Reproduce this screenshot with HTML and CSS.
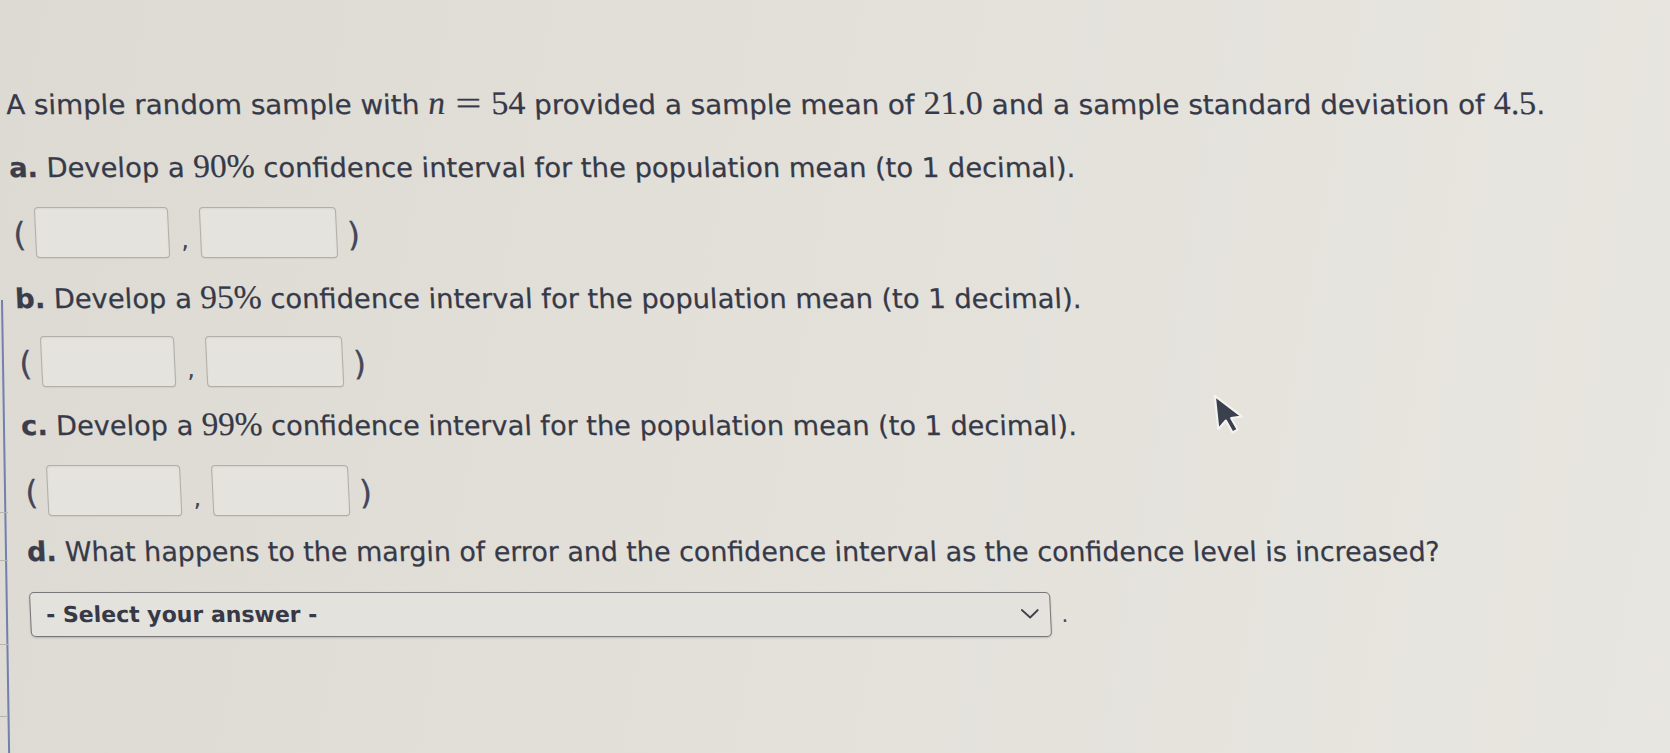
FILE: index.html
```html
<!DOCTYPE html>
<html lang="en">
<head>
<meta charset="utf-8">
<title>Confidence intervals</title>
<link rel="stylesheet" href="styles.css">
</head>
<body>
<div class="page">
  <div class="sheet">
    <p class="line intro">A simple random sample with <span class="math"><i class="mi">n</i><span class="mo">=</span>54</span> provided a sample mean of <span class="math">21.0</span> and a sample standard deviation of <span class="math">4.5</span>.</p>

    <p class="line la"><b class="lbl">a.</b> Develop a <span class="math">90%</span> confidence interval for the population mean (to 1 decimal).</p>
    <div class="interval">
      <span class="paren">(</span><input class="box" type="text" aria-label="lower bound 90%"><span class="comma">,</span><input class="box box2" type="text" aria-label="upper bound 90%"><span class="paren close">)</span>
    </div>

    <p class="line lb"><b class="lbl">b.</b> Develop a <span class="math">95%</span> confidence interval for the population mean (to 1 decimal).</p>
    <div class="interval ib">
      <span class="paren">(</span><input class="box" type="text" aria-label="lower bound 95%"><span class="comma">,</span><input class="box box2" type="text" aria-label="upper bound 95%"><span class="paren close">)</span>
    </div>

    <p class="line lc"><b class="lbl">c.</b> Develop a <span class="math">99%</span> confidence interval for the population mean (to 1 decimal).</p>
    <div class="interval">
      <span class="paren">(</span><input class="box" type="text" aria-label="lower bound 99%"><span class="comma">,</span><input class="box box2" type="text" aria-label="upper bound 99%"><span class="paren close">)</span>
    </div>

    <p class="line ld"><b class="lbl">d.</b> What happens to the margin of error and the confidence interval as the confidence level is increased?</p>
    <div class="answer">
      <div class="select">
        <span class="select-text">- Select your answer -</span>
        <svg class="chev" width="18" height="10" viewBox="0 0 18 10"><path d="M1 1 L9 8.5 L17 1" fill="none" stroke="#3f424d" stroke-width="1.8" stroke-linecap="round" stroke-linejoin="round"/></svg>
      </div>
      <span class="dot">.</span>
    </div>
  </div>

  <div class="edge"></div>
  <div class="tick t1"></div>
  <div class="tick t2"></div>
  <div class="tick t3"></div>
  <div class="tick t4"></div>

  <svg class="cursor" width="32" height="48" viewBox="0 0 26 40">
    <path d="M3 2 L3 30 L10 23.5 L14.5 34 L19 32 L14.6 22 L23.5 21.5 Z" fill="#3b404e" stroke="#f4f3ef" stroke-width="1.8" stroke-linejoin="round"/>
  </svg>
</div>
</body>
</html>
```

FILE: styles.css
```css
html, body {
  margin: 0;
  padding: 0;
}

body {
  width: 1670px;
  height: 753px;
  overflow: hidden;
  background: linear-gradient(100deg, #dcdad2 0%, #e2e0d9 45%, #e8e6e0 100%);
  font-family: "DejaVu Sans", Verdana, sans-serif;
  color: #363948;
}

.page {
  position: relative;
  width: 1670px;
  height: 753px;
}

.sheet {
  display: flex;
  flex-direction: column;
  align-items: flex-start;
  padding: 87px 0 0 6px;
  transform: skewX(2.7deg);
  transform-origin: 0 105px;
}

.line {
  margin: 0;
  height: 32px;
  line-height: 32px;
  white-space: nowrap;
  font-size: 27px;
  -webkit-text-stroke: 0.25px #363948;
  transform-origin: 0 50%;
}

.intro {
  transform: scaleX(1.028);
}

.la { margin-top: 30.5px; transform: scaleX(1.013); }
.lb { transform: scaleX(1.012); }
.lc { transform: scaleX(1.005); }
.ld { transform: scaleX(0.995); }

.interval + .line {
  margin-top: 21px;
}

.line + .interval {
  margin-top: 25px;
}

.interval + .lb {
  margin-top: 23px;
}

.lb + .ib {
  margin-top: 23px;
}

.interval + .ld {
  margin-top: 20px;
}

.lbl {
  font-weight: bold;
  color: #3b3d4c;
}

.math {
  font-family: "Liberation Serif", "Times New Roman", serif;
  font-size: 33px;
  -webkit-text-stroke: 0.2px #363948;
}

.mi {
  font-style: italic;
}

.mo {
  display: inline-block;
  width: 26px;
  text-align: center;
  margin: 0 9px 0 10px;
  transform: scaleX(1.35);
}

.interval {
  display: flex;
  align-items: center;
  height: 51px;
}

.paren {
  font-size: 33px;
  color: #44475a;
  width: 22px;
  padding-left: 1px;
  line-height: 1;
  transform: translateY(2px);
  -webkit-text-stroke: 0.2px #44475a;
}

.paren.close {
  padding-left: 10px;
}

.box {
  appearance: none;
  width: 134px;
  height: 51px;
  box-sizing: border-box;
  margin: 0;
  border: 1.5px solid #b1afa8;
  border-radius: 4px;
  background: #e5e3dd;
  box-shadow: inset 0 1px 2px rgba(0, 0, 0, 0.06), 0 1px 1px rgba(0, 0, 0, 0.06);
}

.box2 {
  width: 137px;
}

.comma {
  width: 31px;
  text-align: center;
  font-size: 25px;
  color: #44475a;
  transform: translateY(7px);
}

.answer {
  display: flex;
  align-items: center;
  margin-top: 24px;
}

.select {
  width: 1021px;
  height: 45px;
  box-sizing: border-box;
  border: 1.5px solid #77777b;
  border-radius: 5px;
  background: #e4e2dc;
  box-shadow: 0 1px 2px rgba(0, 0, 0, 0.18);
  display: flex;
  align-items: center;
  justify-content: space-between;
  padding: 0 11px 0 15px;
}

.select-text {
  font-weight: bold;
  font-size: 22px;
  color: #363948;
}

.chev {
  display: block;
}

.dot {
  font-size: 22px;
  margin-left: 10px;
  color: #4a4d5c;
}

.edge {
  position: absolute;
  left: 1px;
  top: 300px;
  width: 2px;
  height: 470px;
  background: #6575aa;
  transform: rotate(-0.9deg);
  transform-origin: top left;
  opacity: 0.9;
}

.tick {
  position: absolute;
  left: 0;
  width: 8px;
  height: 1px;
  background: #b5b4b0;
}

.t1 { top: 512px; }
.t2 { top: 560px; }
.t3 { top: 644px; }
.t4 { top: 716px; }

.cursor {
  position: absolute;
  left: 1213px;
  top: 392px;
  transform: rotate(-6deg);
}
```
